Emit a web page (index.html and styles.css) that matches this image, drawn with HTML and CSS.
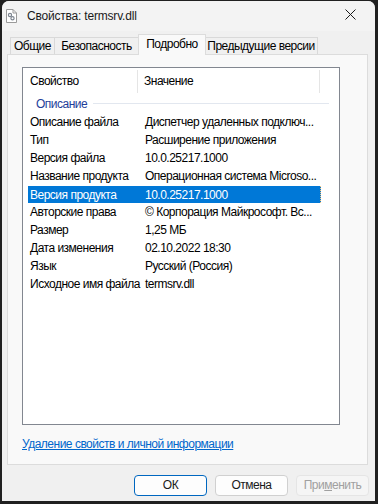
FILE: index.html
```html
<!DOCTYPE html>
<html lang="ru">
<head>
<meta charset="utf-8">
<title>Свойства: termsrv.dll</title>
<link rel="stylesheet" href="styles.css">
</head>
<body>
<div class="window">
  <div class="titlebar">
    <svg class="app-icon" width="11" height="14" viewBox="0 0 11 14">
      <path d="M0.5 0.5 H7 L10.5 4 V13.5 H0.5 Z" fill="#fff" stroke="#9a9a9a"/>
      <path d="M7 0.5 V4 H10.5" fill="none" stroke="#9a9a9a"/>
      <circle cx="4" cy="6" r="1.6" fill="none" stroke="#7d8590" stroke-width="1.2"/>
      <circle cx="6.5" cy="9.3" r="1.6" fill="none" stroke="#7d8590" stroke-width="1.2"/>
    </svg>
    <span class="title">Свойства: termsrv.dll</span>
    <div class="close">
      <svg width="11" height="11" viewBox="0 0 11 11"><path d="M0.5 0.5 L10.5 10.5 M10.5 0.5 L0.5 10.5" stroke="#1a1a1a" stroke-width="1"/></svg>
    </div>
  </div>

  <div class="tabs">
    <div class="tab t1">Общие</div>
    <div class="tab t2">Безопасность</div>
    <div class="tab active">Подробно</div>
    <div class="tab t4">Предыдущие версии</div>
  </div>

  <div class="panel">
    <div class="list">
      <div class="header">
        <div class="hcell c1">Свойство</div>
        <div class="hcell c2">Значение</div>
      </div>
      <div class="group"><span class="group-name">Описание</span><span class="group-line"></span></div>
      <div class="row"><span class="c1">Описание файла</span><span class="c2">Диспетчер удаленных подключ...</span></div>
      <div class="row"><span class="c1">Тип</span><span class="c2">Расширение приложения</span></div>
      <div class="row"><span class="c1">Версия файла</span><span class="c2">10.0.25217.1000</span></div>
      <div class="row"><span class="c1">Название продукта</span><span class="c2">Операционная система Microso...</span></div>
      <div class="row selected"><span class="c1">Версия продукта</span><span class="c2">10.0.25217.1000</span></div>
      <div class="row"><span class="c1">Авторские права</span><span class="c2">© Корпорация Майкрософт. Вс...</span></div>
      <div class="row"><span class="c1">Размер</span><span class="c2">1,25 МБ</span></div>
      <div class="row"><span class="c1">Дата изменения</span><span class="c2">02.10.2022 18:30</span></div>
      <div class="row"><span class="c1">Язык</span><span class="c2">Русский (Россия)</span></div>
      <div class="row"><span class="c1">Исходное имя файла</span><span class="c2">termsrv.dll</span></div>
    </div>
    <a class="link" href="#">Удаление свойств и личной информации</a>
  </div>

  <div class="buttons">
    <div class="btn default">ОК</div>
    <div class="btn">Отмена</div>
    <div class="btn disabled">При<u>м</u>енить</div>
  </div>
</div>
</body>
</html>
```
FILE: styles.css
```css
* { box-sizing: border-box; }
html, body { margin: 0; padding: 0; }
body {
  background: #202020;
  width: 378px;
  height: 504px;
  overflow: hidden;
  font-family: "Liberation Sans", Arial, sans-serif;
  font-size: 12px;
  letter-spacing: -0.5px;
  color: #000;
}
.window {
  margin: 1px 3px 0 2px;
  width: 373px;
  height: 500px;
  background: #f0f0f0;
  border-radius: 7px 7px 0 0;
  display: flex;
  flex-direction: column;
}
.titlebar {
  height: 30px;
  display: flex;
  align-items: center;
  background: #f3f3f3;
  border-radius: 7px 7px 0 0;
  padding-left: 4px;
}
.app-icon { margin-top: -1px; }
.title {
  margin-left: 10px;
  color: #1a1a1a;
  font-size: 12px;
  letter-spacing: -0.2px;
}
.close {
  margin-left: auto;
  width: 46px;
  height: 30px;
  display: flex;
  align-items: center;
  justify-content: center;
  padding-bottom: 4px;
  padding-right: 4px;
}
.tabs {
  display: flex;
  align-items: flex-end;
  height: 21px;
  margin-top: 2px;
  padding-left: 8px;
  position: relative;
  z-index: 1;
}
.tab {
  height: 17px;
  border: 1px solid #d9d9d9;
  border-bottom: none;
  border-left-width: 0;
  background: #f0f0f0;
  line-height: 16px;
  text-align: center;
}
.tab.t1 { width: 45px; border-left-width: 1px; }
.tab.t2 { width: 84px; }
.tab.t4 { width: 113px; border-left-width: 0; }
.tab.active {
  width: 68px;
  height: 21px;
  margin: 0 -1px -1px -1px;
  border-left-width: 1px;
  background: #f9f9f9;
  border-color: #dcdcdc;
  line-height: 18px;
  position: relative;
}
.panel {
  margin: 0 7px 0 5px;
  height: 411px;
  background: #f9f9f9;
  border: 1px solid #dcdcdc;
  padding: 12px 0 0 14px;
}
.list {
  width: 318px;
  height: 358px;
  background: #fff;
  border: 1px solid #828790;
}
.header {
  display: flex;
  height: 26px;
  align-items: center;
}
.hcell {
  height: 23px;
  line-height: 23px;
  border-right: 1px solid #e5e5e5;
}
.header .c1 { width: 115px; padding-left: 7px; }
.header .c2 { width: 182px; padding-left: 6px; }
.group {
  height: 19px;
  display: flex;
  align-items: center;
  padding-left: 13px;
}
.group-name {
  color: #1e3e9a;
  font-size: 12px;
}
.group-line {
  flex: 1;
  height: 1px;
  background: #e2e7ef;
  margin: 0 10px 0 6px;
}
.row {
  display: flex;
  height: 18px;
  align-items: center;
  margin-left: 5px;
  width: 293px;
  white-space: nowrap;
}
.row .c1 { width: 115px; padding-left: 2px; }
.row .c2 { padding-left: 2px; }
.row.selected {
  background: #0078d7;
  color: #fff;
  height: 17px;
  margin-top: 1px;
  border-right: 1px dotted #f2c27a;
}
.link {
  display: block;
  margin-top: 11px;
  color: #0066cc;
  text-decoration: underline;
  line-height: 16px;
  width: max-content;
}
.buttons {
  display: flex;
  justify-content: flex-end;
  gap: 8px;
  margin-top: 10px;
  padding-right: 6px;
}
.btn {
  width: 73px;
  height: 21px;
  border: 1px solid #d0d0d0;
  border-radius: 4px;
  background: #fdfdfd;
  text-align: center;
  line-height: 19px;
  color: #1a1a1a;
}
.btn.default {
  border-color: #0067c0;
}
.btn.disabled {
  color: #a0a0a0;
  background: #f5f5f5;
  border-color: #e5e5e5;
}
.btn.disabled u { text-decoration-color: #a0a0a0; }
```
